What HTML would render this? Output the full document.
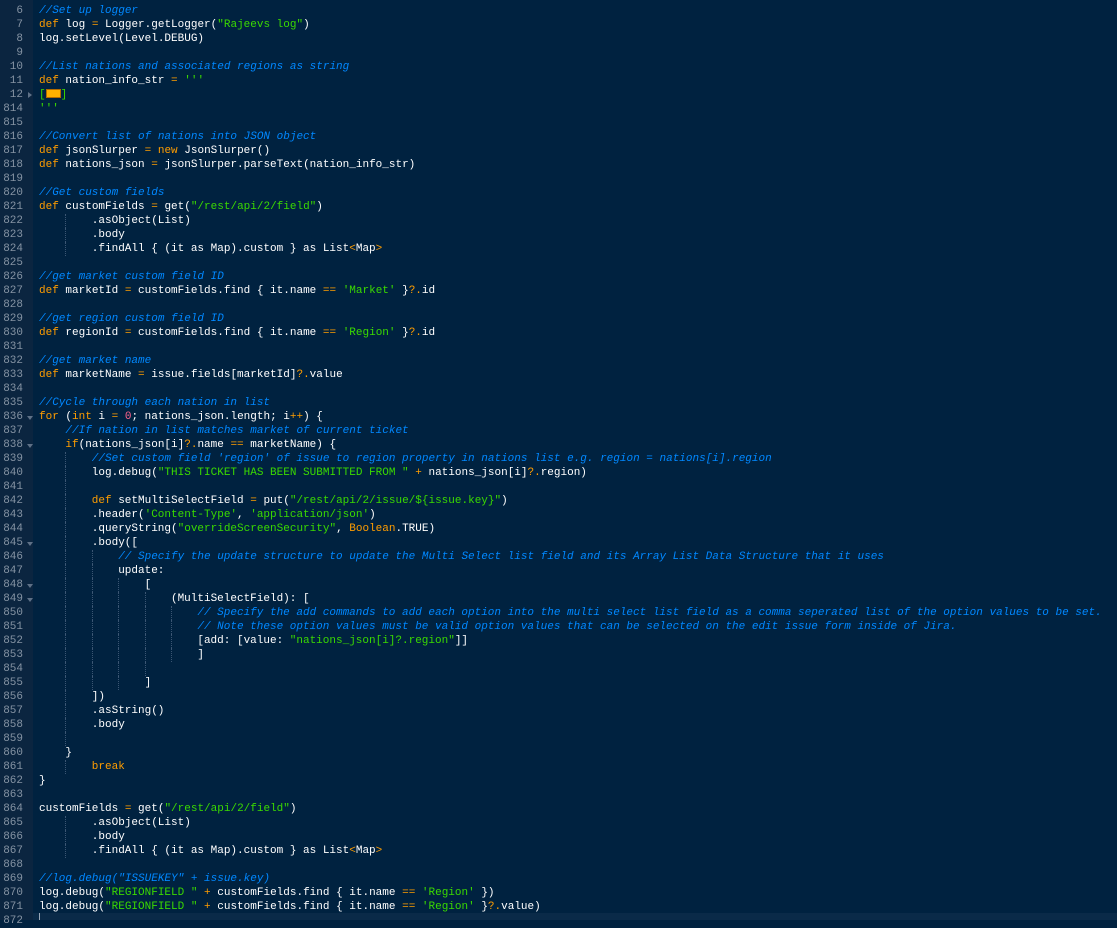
<!DOCTYPE html>
<html><head><meta charset="utf-8"><style>
html,body{margin:0;padding:0;width:1117px;height:920px;overflow:hidden;background:#002240;}
#g{position:absolute;left:0;top:0;width:33px;height:920px;background:#0b2540;}
#ed{position:absolute;left:0;top:4px;font:11px/14px "Liberation Mono",monospace;color:#fff;}
.l{height:14px;white-space:pre;position:relative;}
.n{display:inline-block;width:23px;text-align:right;color:#8593a3;vertical-align:top;height:14px;}
.f{display:inline-block;width:16px;height:14px;position:relative;vertical-align:top;}
.f.a::after{content:"";position:absolute;left:4px;top:6px;border-left:3px solid transparent;border-right:3px solid transparent;border-top:4px solid #5f7187;}
.f.r::after{content:"";position:absolute;left:5px;top:4px;border-top:3px solid transparent;border-bottom:3px solid transparent;border-left:4px solid #5f7187;}
.c{color:#0088ff;font-style:italic}
.k{color:#ff9d00}
.s{color:#3ad900}
.m{color:#ff628c}
i{font-style:normal;display:inline-block;width:26.4px;height:14px;vertical-align:top;border-left:1px dotted #3b5673;box-sizing:border-box;}
.cur{position:absolute;left:39px;top:913px;width:1px;height:7px;background:#9aa8b8}
.last{position:absolute;left:33px;top:913px;width:1084px;height:7px;background:#0a2a48}
.fold{display:inline-block;width:15px;height:9px;background:#ffb000;border:1px solid #b36b00;vertical-align:-1px;box-sizing:border-box}
</style></head><body>
<div id="g"></div><div class="last"></div><div class="cur"></div>
<div id="ed">
<div class="l"><span class="n">6</span><span class="f"></span><span class="c">//Set up logger</span></div>
<div class="l"><span class="n">7</span><span class="f"></span><span class="k">def</span> log <span class="k">=</span> Logger.getLogger(<span class="s">"Rajeevs log"</span>)</div>
<div class="l"><span class="n">8</span><span class="f"></span>log.setLevel(Level.DEBUG)</div>
<div class="l"><span class="n">9</span><span class="f"></span></div>
<div class="l"><span class="n">10</span><span class="f"></span><span class="c">//List nations and associated regions as string</span></div>
<div class="l"><span class="n">11</span><span class="f"></span><span class="k">def</span> nation_info_str <span class="k">=</span> <span class="s">'''</span></div>
<div class="l"><span class="n">12</span><span class="f r"></span><span class="s">[</span><span class="fold"></span><span class="s">]</span></div>
<div class="l"><span class="n">814</span><span class="f"></span><span class="s">'''</span></div>
<div class="l"><span class="n">815</span><span class="f"></span></div>
<div class="l"><span class="n">816</span><span class="f"></span><span class="c">//Convert list of nations into JSON object</span></div>
<div class="l"><span class="n">817</span><span class="f"></span><span class="k">def</span> jsonSlurper <span class="k">=</span> <span class="k">new</span> JsonSlurper()</div>
<div class="l"><span class="n">818</span><span class="f"></span><span class="k">def</span> nations_json <span class="k">=</span> jsonSlurper.parseText(nation_info_str)</div>
<div class="l"><span class="n">819</span><span class="f"></span></div>
<div class="l"><span class="n">820</span><span class="f"></span><span class="c">//Get custom fields</span></div>
<div class="l"><span class="n">821</span><span class="f"></span><span class="k">def</span> customFields <span class="k">=</span> get(<span class="s">"/rest/api/2/field"</span>)</div>
<div class="l"><span class="n">822</span><span class="f"></span>    <i></i>.asObject(List)</div>
<div class="l"><span class="n">823</span><span class="f"></span>    <i></i>.body</div>
<div class="l"><span class="n">824</span><span class="f"></span>    <i></i>.findAll { (it as Map).custom } as List<span class="k">&lt;</span>Map<span class="k">&gt;</span></div>
<div class="l"><span class="n">825</span><span class="f"></span></div>
<div class="l"><span class="n">826</span><span class="f"></span><span class="c">//get market custom field ID</span></div>
<div class="l"><span class="n">827</span><span class="f"></span><span class="k">def</span> marketId <span class="k">=</span> customFields.find { it.name <span class="k">==</span> <span class="s">'Market'</span> }<span class="k">?.</span>id</div>
<div class="l"><span class="n">828</span><span class="f"></span></div>
<div class="l"><span class="n">829</span><span class="f"></span><span class="c">//get region custom field ID</span></div>
<div class="l"><span class="n">830</span><span class="f"></span><span class="k">def</span> regionId <span class="k">=</span> customFields.find { it.name <span class="k">==</span> <span class="s">'Region'</span> }<span class="k">?.</span>id</div>
<div class="l"><span class="n">831</span><span class="f"></span></div>
<div class="l"><span class="n">832</span><span class="f"></span><span class="c">//get market name</span></div>
<div class="l"><span class="n">833</span><span class="f"></span><span class="k">def</span> marketName <span class="k">=</span> issue.fields[marketId]<span class="k">?.</span>value</div>
<div class="l"><span class="n">834</span><span class="f"></span></div>
<div class="l"><span class="n">835</span><span class="f"></span><span class="c">//Cycle through each nation in list</span></div>
<div class="l"><span class="n">836</span><span class="f a"></span><span class="k">for</span> (<span class="k">int</span> i <span class="k">=</span> <span class="m">0</span>; nations_json.length; i<span class="k">++</span>) {</div>
<div class="l"><span class="n">837</span><span class="f"></span>    <span class="c">//If nation in list matches market of current ticket</span></div>
<div class="l"><span class="n">838</span><span class="f a"></span>    <span class="k">if</span>(nations_json[i]<span class="k">?.</span>name <span class="k">==</span> marketName) {</div>
<div class="l"><span class="n">839</span><span class="f"></span>    <i></i><span class="c">//Set custom field 'region' of issue to region property in nations list e.g. region = nations[i].region</span></div>
<div class="l"><span class="n">840</span><span class="f"></span>    <i></i>log.debug(<span class="s">"THIS TICKET HAS BEEN SUBMITTED FROM "</span> <span class="k">+</span> nations_json[i]<span class="k">?.</span>region)</div>
<div class="l"><span class="n">841</span><span class="f"></span>    <i></i></div>
<div class="l"><span class="n">842</span><span class="f"></span>    <i></i><span class="k">def</span> setMultiSelectField <span class="k">=</span> put(<span class="s">"/rest/api/2/issue/${issue.key}"</span>)</div>
<div class="l"><span class="n">843</span><span class="f"></span>    <i></i>.header(<span class="s">'Content-Type'</span>, <span class="s">'application/json'</span>)</div>
<div class="l"><span class="n">844</span><span class="f"></span>    <i></i>.queryString(<span class="s">"overrideScreenSecurity"</span>, <span class="k">Boolean</span>.TRUE)</div>
<div class="l"><span class="n">845</span><span class="f a"></span>    <i></i>.body([</div>
<div class="l"><span class="n">846</span><span class="f"></span>    <i></i><i></i><span class="c">// Specify the update structure to update the Multi Select list field and its Array List Data Structure that it uses</span></div>
<div class="l"><span class="n">847</span><span class="f"></span>    <i></i><i></i>update:</div>
<div class="l"><span class="n">848</span><span class="f a"></span>    <i></i><i></i><i></i>[</div>
<div class="l"><span class="n">849</span><span class="f a"></span>    <i></i><i></i><i></i><i></i>(MultiSelectField): [</div>
<div class="l"><span class="n">850</span><span class="f"></span>    <i></i><i></i><i></i><i></i><i></i><span class="c">// Specify the add commands to add each option into the multi select list field as a comma seperated list of the option values to be set.</span></div>
<div class="l"><span class="n">851</span><span class="f"></span>    <i></i><i></i><i></i><i></i><i></i><span class="c">// Note these option values must be valid option values that can be selected on the edit issue form inside of Jira.</span></div>
<div class="l"><span class="n">852</span><span class="f"></span>    <i></i><i></i><i></i><i></i><i></i>[add: [value: <span class="s">"nations_json[i]?.region"</span>]]</div>
<div class="l"><span class="n">853</span><span class="f"></span>    <i></i><i></i><i></i><i></i><i></i>]</div>
<div class="l"><span class="n">854</span><span class="f"></span>    <i></i><i></i><i></i><i></i></div>
<div class="l"><span class="n">855</span><span class="f"></span>    <i></i><i></i><i></i>]</div>
<div class="l"><span class="n">856</span><span class="f"></span>    <i></i>])</div>
<div class="l"><span class="n">857</span><span class="f"></span>    <i></i>.asString()</div>
<div class="l"><span class="n">858</span><span class="f"></span>    <i></i>.body</div>
<div class="l"><span class="n">859</span><span class="f"></span>    <i></i></div>
<div class="l"><span class="n">860</span><span class="f"></span>    }</div>
<div class="l"><span class="n">861</span><span class="f"></span>    <i></i><span class="k">break</span></div>
<div class="l"><span class="n">862</span><span class="f"></span>}</div>
<div class="l"><span class="n">863</span><span class="f"></span></div>
<div class="l"><span class="n">864</span><span class="f"></span>customFields <span class="k">=</span> get(<span class="s">"/rest/api/2/field"</span>)</div>
<div class="l"><span class="n">865</span><span class="f"></span>    <i></i>.asObject(List)</div>
<div class="l"><span class="n">866</span><span class="f"></span>    <i></i>.body</div>
<div class="l"><span class="n">867</span><span class="f"></span>    <i></i>.findAll { (it as Map).custom } as List<span class="k">&lt;</span>Map<span class="k">&gt;</span></div>
<div class="l"><span class="n">868</span><span class="f"></span></div>
<div class="l"><span class="n">869</span><span class="f"></span><span class="c">//log.debug("ISSUEKEY" + issue.key)</span></div>
<div class="l"><span class="n">870</span><span class="f"></span>log.debug(<span class="s">"REGIONFIELD "</span> <span class="k">+</span> customFields.find { it.name <span class="k">==</span> <span class="s">'Region'</span> })</div>
<div class="l"><span class="n">871</span><span class="f"></span>log.debug(<span class="s">"REGIONFIELD "</span> <span class="k">+</span> customFields.find { it.name <span class="k">==</span> <span class="s">'Region'</span> }<span class="k">?.</span>value)</div>
<div class="l"><span class="n">872</span><span class="f"></span></div>
</div>
</body></html>
